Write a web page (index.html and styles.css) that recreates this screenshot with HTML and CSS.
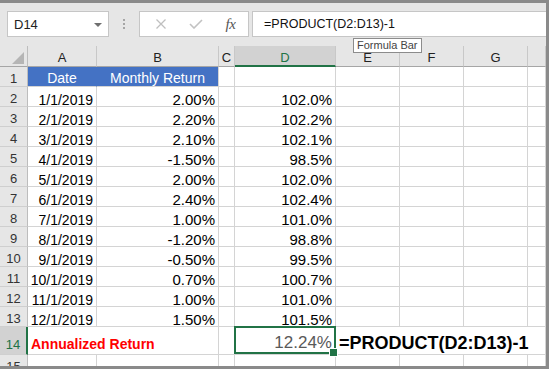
FILE: index.html
```html
<!DOCTYPE html>
<html lang="en">
<head>
    <meta charset="UTF-8" />
    <meta name="viewport" content="width=device-width, initial-scale=1.0">
    <title>Annualized Return</title>
    <link rel="stylesheet" href="styles.css">
</head>
<body>
    <div class="window">
        <div class="toolbar">
            <div class="name-box">
                <span>D14</span>
                <span class="drop"></span>
            </div>
            <div class="grip"><i></i><i></i><i></i></div>
            <div class="fx-buttons">
                <span class="slot">
                    <svg width="12" height="10" viewBox="0 0 12 10"><path d="M1.5 0.5 L10.5 9.5 M10.5 0.5 L1.5 9.5" stroke="#bfbfbf" stroke-width="1.3" fill="none" /></svg>
                </span>
                <span class="slot">
                    <svg width="14" height="10" viewBox="0 0 14 10"><path d="M1 5 L5 9 L13 1" stroke="#c2c2c2" stroke-width="1.6" fill="none" /></svg>
                </span>
                <span class="slot fx">fx</span>
            </div>
            <div class="formula">=PRODUCT(D2:D13)-1</div>
        </div>
        <div class="sheet" id="sheet"></div>
        <div class="tooltip">Formula Bar</div>
    </div>

    <script>
        const cols = ['A', 'B', 'C', 'D', 'E', 'F', 'G', ''];
        const rows = [
            ['1/1/2019', '2.00%', '102.0%'],
            ['2/1/2019', '2.20%', '102.2%'],
            ['3/1/2019', '2.10%', '102.1%'],
            ['4/1/2019', '-1.50%', '98.5%'],
            ['5/1/2019', '2.00%', '102.0%'],
            ['6/1/2019', '2.40%', '102.4%'],
            ['7/1/2019', '1.00%', '101.0%'],
            ['8/1/2019', '-1.20%', '98.8%'],
            ['9/1/2019', '-0.50%', '99.5%'],
            ['10/1/2019', '0.70%', '100.7%'],
            ['11/1/2019', '1.00%', '101.0%'],
            ['12/1/2019', '1.50%', '101.5%']
        ];
        const sheet = document.getElementById('sheet');

        function cell(text, cls) {
            const div = document.createElement('div');
            div.className = 'cell ' + (cls || '');
            div.textContent = text || '';
            sheet.appendChild(div);
            return div;
        }

        function blanks(n, cls) {
            for (let i = 0; i < n; i++) cell('', cls);
        }

        // column headers
        cell('', 'corner');
        cols.forEach(c => cell(c, 'col-head' + (c === 'D' ? ' active' : '')));

        // row 1
        cell('1', 'row-head');
        cell('Date', 'title first');
        cell('Monthly Return', 'title');
        blanks(6);

        // rows 2 - 13
        rows.forEach((r, i) => {
            cell(String(i + 2), 'row-head');
            cell(r[0], 'num date');
            cell(r[1], 'num');
            cell('');
            cell(r[2], 'num');
            blanks(4);
        });

        // row 14
        cell('14', 'row-head active tall');
        cell('Annualized Return', 'label spill');
        blanks(2);
        cell('12.24%', 'num result');
        cell('=PRODUCT(D2:D13)-1', 'big-formula spill');
        blanks(2, 'spill');
        cell('');

        // row 15
        cell('15', 'row-head');
        blanks(8);
    </script>
</body>
</html>
```

FILE: styles.css
```css
* {
    margin: 0;
    padding: 0;
    box-sizing: border-box;
}

body {
    font-family: "Liberation Sans", Arial, sans-serif;
    background-color: #fff;
    color: #000;
}

.window {
    position: relative;
    width: 549px;
    height: 369px;
    border-top: 3px solid #8a8a8a;
    border-right: 3px solid #8a8a8a;
    border-bottom: 3px solid #8a8a8a;
    background-color: #e6e6e6;
    display: flex;
    flex-direction: column;
    overflow: hidden;
}

/* formula bar */
.toolbar {
    height: 43px;
    display: flex;
    align-items: stretch;
    padding: 8px 0 9px 7px;
}

.name-box {
    width: 102px;
    background-color: #fff;
    border: 1px solid #c6c6c6;
    display: flex;
    align-items: center;
    justify-content: space-between;
    padding: 0 6px 0 6px;
    font-size: 13px;
    color: #222;
}

.drop {
    width: 0;
    height: 0;
    border-left: 4px solid transparent;
    border-right: 4px solid transparent;
    border-top: 4px solid #6f6f6f;
    margin-top: 1px;
}

.grip {
    width: 30px;
    display: flex;
    flex-direction: column;
    align-items: center;
    justify-content: center;
    gap: 2px;
}

.grip i {
    width: 2px;
    height: 2px;
    background-color: #a5a5a5;
}

.fx-buttons {
    width: 110px;
    background-color: #fff;
    border: 1px solid #c6c6c6;
    display: flex;
    align-items: center;
    padding-left: 3px;
}

.slot {
    width: 35px;
    display: flex;
    justify-content: center;
    align-items: center;
}

.fx {
    font-family: "Liberation Serif", "Times New Roman", serif;
    font-style: italic;
    font-size: 15px;
    color: #555;
    letter-spacing: -0.5px;
}

.formula {
    flex: 1;
    margin-left: 3px;
    background-color: #fff;
    border: 1px solid #c6c6c6;
    border-right: none;
    padding-left: 11px;
    font-size: 12.5px;
    line-height: 24px;
    color: #111;
}

/* grid */
.sheet {
    flex: 1;
    display: grid;
    grid-template-columns: 28px 69px 122px 16px 101px 64px 64px 64px 18px;
    grid-template-rows: 21px repeat(13, 20px) 28px 1fr;
    background-color: #fff;
}

.cell {
    min-width: 0;
    border-right: 1px solid #d4d4d4;
    border-bottom: 1px solid #d4d4d4;
    font-size: 15px;
    line-height: 19px;
    padding: 3px 3px 0 3px;
    white-space: nowrap;
}

.corner {
    position: relative;
    background-color: #e6e6e6;
    border-right: 1px solid #bdbdbd;
    border-bottom: 1px solid #a6a6a6;
}

.corner::after {
    content: "";
    position: absolute;
    right: 3px;
    bottom: 2px;
    width: 0;
    height: 0;
    border-left: 12px solid transparent;
    border-bottom: 12px solid #b5b5b5;
}

.col-head {
    background-color: #e6e6e6;
    border-right: 1px solid #c8c8c8;
    border-bottom: 1px solid #a6a6a6;
    text-align: center;
    font-size: 13px;
    line-height: 20px;
    padding: 2px 0 0 0;
    color: #222;
}

.col-head.active {
    background-color: #d2d2d2;
    border-bottom: 2px solid #217346;
    color: #217346;
}

.row-head {
    background-color: #e6e6e6;
    border-right: 1px solid #bdbdbd;
    border-bottom: 1px solid #cfcfcf;
    text-align: center;
    font-size: 13px;
    padding: 2px 0 0 0;
    color: #333;
}

.row-head.active {
    background-color: #d2d2d2;
    border-right: 2px solid #217346;
    color: #217346;
}

.row-head.tall {
    padding-top: 8px;
}

.title {
    background-color: #4472c4;
    color: #fff;
    text-align: center;
    font-size: 14px;
    padding-top: 2px;
}

.title.first {
    border-right-color: #4472c4;
}

.num {
    text-align: right;
}

.date {
    font-size: 14px;
    padding: 4px 3px 0 0;
}

.label {
    color: #ff0000;
    font-weight: bold;
    font-size: 14px;
    padding-top: 8px;
}

.spill {
    overflow: visible;
    border-right: none;
}

.result {
    position: relative;
    font-size: 17px;
    line-height: 22px;
    padding-top: 5px;
    color: #595959;
}

.result::before {
    content: "";
    position: absolute;
    left: -1px;
    top: -1px;
    right: -1px;
    bottom: 0;
    border: 2px solid #217346;
}

.result::after {
    content: "";
    position: absolute;
    right: -3px;
    bottom: -3px;
    width: 7px;
    height: 7px;
    background-color: #217346;
    border: 1px solid #fff;
}

.big-formula {
    font-weight: bold;
    font-size: 18px;
    line-height: 22px;
    padding-top: 5px;
}

.tooltip {
    position: absolute;
    left: 353px;
    top: 35px;
    width: 69px;
    height: 15px;
    background-color: #fff;
    border: 1px solid #8c8c8c;
    font-size: 11px;
    line-height: 13px;
    padding-left: 3px;
    color: #444;
    white-space: nowrap;
}
```
